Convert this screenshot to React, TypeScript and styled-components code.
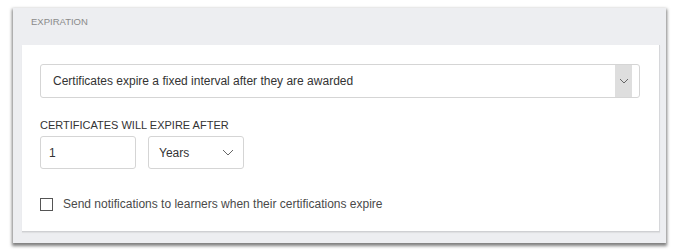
import React from "react";
import styled, { createGlobalStyle } from "styled-components";

const Global = createGlobalStyle`
  html, body { margin: 0; padding: 0; background: #ffffff; }
  body { font-family: "Liberation Sans", Arial, sans-serif; }
`;

const Page = styled.div`
  padding: 8px 0 0 13px;
  width: 682px;
  height: 250px;
  box-sizing: border-box;
`;

const Panel = styled.section`
  width: 653px;
  height: 235px;
  box-sizing: border-box;
  background: #edeef1;
  box-shadow: 0 2px 3px 1px rgba(0, 0, 0, 0.5);
  padding: 0 6px 11px 9px;
  display: flex;
  flex-direction: column;
`;

const PanelTitle = styled.div`
  height: 37px;
  box-sizing: border-box;
  padding: 8px 0 0 9px;
  font-size: 9.5px;
  color: #8a8a8a;
`;

const Card = styled.div`
  flex: 1;
  background: #ffffff;
  border-right: 1px solid #d6d7da;
  border-bottom: 1px solid #cfd0d3;
  box-shadow: 0 1px 1px rgba(0, 0, 0, 0.06);
  padding: 19px 19px 0 18px;
  display: flex;
  flex-direction: column;
`;

const SelectBox = styled.div`
  height: 34px;
  box-sizing: border-box;
  border: 1px solid #d5d5d5;
  border-radius: 3px;
  display: flex;
  align-items: stretch;
  padding-right: 7px;
`;

const SelectText = styled.div`
  flex: 1;
  display: flex;
  align-items: center;
  padding-left: 12px;
  font-size: 12px;
  color: #333333;
`;

const ArrowCell = styled.div`
  width: 17px;
  background: #dedede;
  display: flex;
  align-items: center;
  justify-content: center;
`;

const FieldLabel = styled.div`
  margin-top: 21px;
  font-size: 11px;
  color: #333333;
  line-height: 13px;
`;

const FieldRow = styled.div`
  margin-top: 4px;
  display: flex;
  gap: 12px;
`;

const SmallBox = styled.div<{ $padLeft: number }>`
  width: 96px;
  height: 33px;
  box-sizing: border-box;
  border: 1px solid #d5d5d5;
  border-radius: 3px;
  display: flex;
  align-items: center;
  justify-content: space-between;
  padding: 0 9px 0 ${(p) => p.$padLeft}px;
  font-size: 12px;
  color: #333333;
`;

const CheckRow = styled.label`
  margin-top: 28px;
  display: flex;
  align-items: center;
  gap: 10px;
  font-size: 12px;
  line-height: 14px;
  color: #4a4a4a;
`;

const CheckBox = styled.span`
  width: 13px;
  height: 13px;
  box-sizing: border-box;
  border: 1px solid #555555;
  background: #ffffff;
  flex-shrink: 0;
`;

const Chevron = ({ w = 9, h = 5 }: { w?: number; h?: number }) => (
  <svg width={w + 2} height={h + 2} viewBox={`0 0 ${w + 2} ${h + 2}`}>
    <polyline
      points={`1,1 ${(w + 2) / 2},${h + 1} ${w + 1},1`}
      fill="none"
      stroke="#666"
      strokeWidth="1"
    />
  </svg>
);

export default function App() {
  return (
    <>
      <Global />
      <Page>
        <Panel>
          <PanelTitle>EXPIRATION</PanelTitle>
          <Card>
            <SelectBox>
              <SelectText>Certificates expire a fixed interval after they are awarded</SelectText>
              <ArrowCell>
                <Chevron w={8} h={4} />
              </ArrowCell>
            </SelectBox>
            <FieldLabel>CERTIFICATES WILL EXPIRE AFTER</FieldLabel>
            <FieldRow>
              <SmallBox $padLeft={8}>1</SmallBox>
              <SmallBox $padLeft={10}>
                Years
                <Chevron w={10} h={5} />
              </SmallBox>
            </FieldRow>
            <CheckRow>
              <CheckBox />
              Send notifications to learners when their certifications expire
            </CheckRow>
          </Card>
        </Panel>
      </Page>
    </>
  );
}
